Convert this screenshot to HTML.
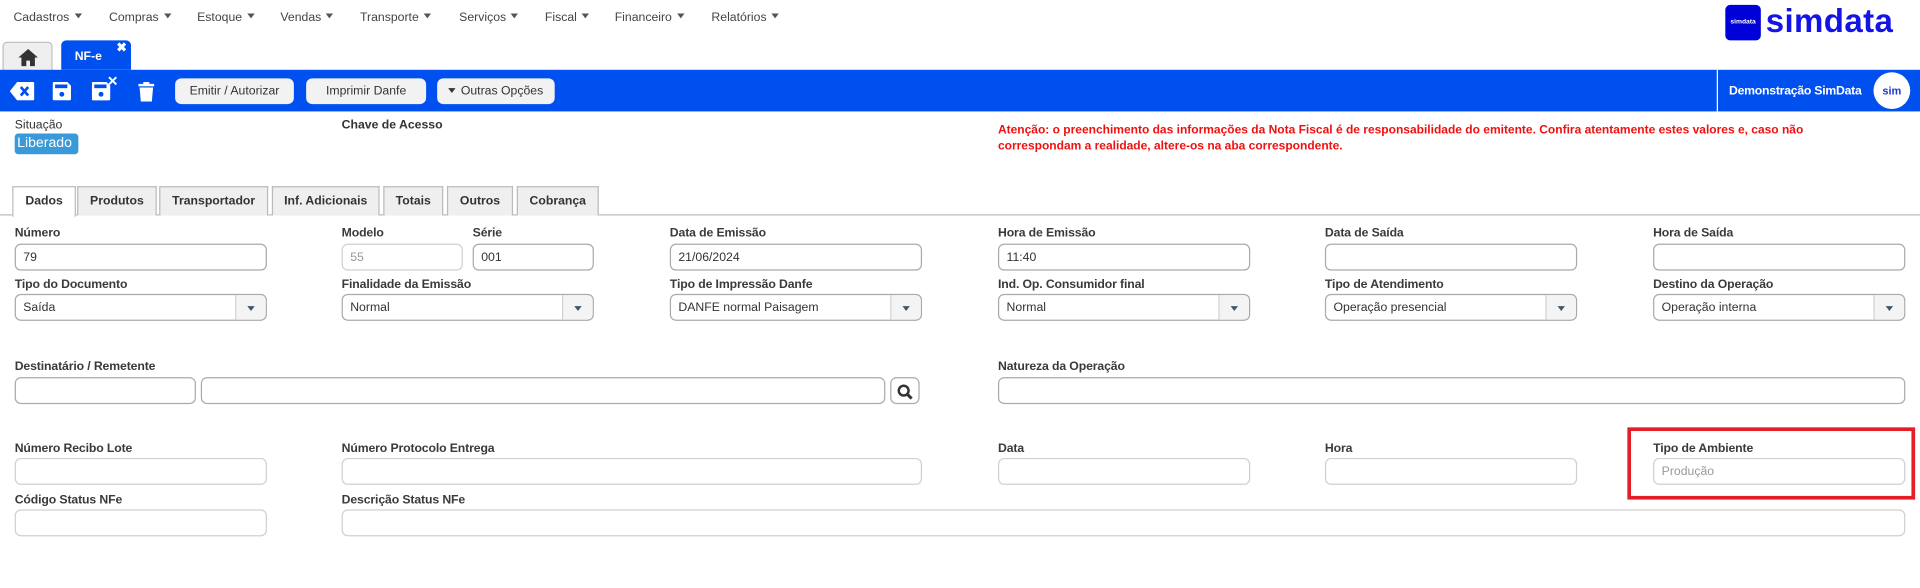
<!DOCTYPE html>
<html><head><meta charset="utf-8">
<style>
*{box-sizing:border-box;margin:0;padding:0}
html,body{width:1920px;height:588px;overflow:hidden;background:#fff}
#w{position:absolute;left:0;top:0;width:1568px;height:480px;transform:scale(1.2245);transform-origin:0 0;font-family:"Liberation Sans",sans-serif;color:#333}
.a{position:absolute}
.menu{top:9px;font-size:10px;color:#444}
.menu span{position:absolute;white-space:nowrap}
.car{display:inline-block;border-left:3px solid transparent;border-right:3px solid transparent;border-top:4px solid #555;vertical-align:middle;margin-left:4px;margin-top:-2px}
.lbl{position:absolute;font-size:10px;font-weight:bold;color:#3a3a3a;white-space:nowrap;letter-spacing:-0.1px}
.inp{position:absolute;height:22px;border:1px solid #aaa;border-radius:5px;background:#fff;font-size:10px;color:#333;padding:5px 6px;white-space:nowrap}
.dis{border-color:#d0d0d0;color:#999}
.sel .dd{position:absolute;right:0;top:0;bottom:0;width:25px;border-left:1px solid #ccc;background:#f4f4f4;border-radius:0 5px 5px 0}
.sel .dd:after{content:"";position:absolute;left:9px;top:9px;border-left:3px solid transparent;border-right:3px solid transparent;border-top:4px solid #456}
.tab{position:absolute;top:152px;height:24px;border:1px solid #bbb;border-bottom:none;background:#efefef;font-size:10px;font-weight:bold;text-align:center;padding-top:6px;color:#333}
.btn{position:absolute;top:64px;height:21px;background:#f2f2f2;border-radius:5px;font-size:10px;color:#333;text-align:center;padding-top:5px}
</style></head><body><div id="w">
<div class="a menu" style="left:0;width:700px">
<span style="left:11px">Cadastros<i class="car"></i></span>
<span style="left:89px">Compras<i class="car"></i></span>
<span style="left:161px">Estoque<i class="car"></i></span>
<span style="left:229px">Vendas<i class="car"></i></span>
<span style="left:294px">Transporte<i class="car"></i></span>
<span style="left:375px">Serviços<i class="car"></i></span>
<span style="left:445px">Fiscal<i class="car"></i></span>
<span style="left:502px">Financeiro<i class="car"></i></span>
<span style="left:581px">Relatórios<i class="car"></i></span>
</div>
<div class="a" style="left:1409px;top:4px;width:29px;height:29px;background:#0000d8;border-radius:4px;color:#fff;font-size:5.5px;font-weight:bold;text-align:center;padding-top:11px">simdata</div>
<div class="a" style="left:1442px;top:2px;font-size:27px;font-weight:bold;color:#1414e6;letter-spacing:0.3px">simdata</div>
<div class="a" style="left:2px;top:34px;width:41px;height:24px;border:1px solid #bbb;border-bottom:none;border-radius:4px 4px 0 0;background:#efefef">
<svg width="18" height="16" viewBox="0 0 18 16" style="position:absolute;left:11px;top:4px"><path d="M9 1 L1 8 H3.5 V15 H7.5 V10.5 H10.5 V15 H14.5 V8 H17 Z" fill="#333"/></svg></div>
<div class="a" style="left:50px;top:33px;width:57px;height:24px;background:#0050ef;border-radius:4px 4px 0 0;color:#fff;font-size:10px;font-weight:bold;padding:8px 0 0 11px">NF-e<span style="position:absolute;left:45px;top:1px;font-size:10px">✖</span></div>
<div class="a" style="left:0;top:57px;width:1568px;height:34px;background:#0050ef"></div>
<div class="a" style="left:1402px;top:57px;width:1px;height:34px;background:#fff"></div>
<div class="a" style="left:1412px;top:69px;font-size:10px;font-weight:bold;color:#fff;letter-spacing:-0.2px">Demonstração SimData</div>
<div class="a" style="left:1530px;top:59px;width:30px;height:30px;border-radius:50%;background:#fff;color:#1a3acc;font-size:9px;font-weight:bold;text-align:center;padding-top:10px">sim</div>
<svg class="a" style="left:8px;top:67px" width="20" height="15" viewBox="0 0 20 15"><path d="M6 0 H19 a1 1 0 0 1 1 1 V14 a1 1 0 0 1 -1 1 H6 L0 7.5 Z" fill="#fff"/><path d="M9 4 L15 11 M15 4 L9 11" stroke="#0050ef" stroke-width="2.2"/></svg>
<svg class="a" style="left:43px;top:67px" width="15" height="15" viewBox="0 0 15 15"><path d="M0 1 a1 1 0 0 1 1 -1 H12 L15 3 V14 a1 1 0 0 1 -1 1 H1 a1 1 0 0 1 -1 -1 Z" fill="#fff"/><rect x="2" y="2" width="10" height="3" fill="#0050ef"/><circle cx="7.5" cy="10" r="2" fill="#0050ef"/></svg>
<svg class="a" style="left:75px;top:62px" width="22" height="22" viewBox="0 0 22 22"><path d="M0 6 a1 1 0 0 1 1 -1 H12 L15 8 V19 a1 1 0 0 1 -1 1 H1 a1 1 0 0 1 -1 -1 Z" fill="#fff"/><rect x="2" y="7" width="10" height="3" fill="#0050ef"/><circle cx="7.5" cy="15" r="2" fill="#0050ef"/><path d="M14 1 L20 7 M20 1 L14 7" stroke="#fff" stroke-width="1.6"/></svg>
<svg class="a" style="left:113px;top:67px" width="13" height="16" viewBox="0 0 13 16"><rect x="0" y="1.5" width="13" height="2" fill="#fff"/><rect x="4" y="0" width="5" height="2" fill="#fff"/><path d="M1 4.5 H12 L11 16 H2 Z" fill="#fff"/></svg>
<div class="btn" style="left:143px;width:97px">Emitir / Autorizar</div>
<div class="btn" style="left:250px;width:98px">Imprimir Danfe</div>
<div class="btn" style="left:357px;width:96px"><i class="car" style="margin:0 4px 0 0;border-top-color:#333"></i>Outras Opções</div>
<div class="a" style="left:12px;top:97px;font-size:10px;color:#333">Situação</div>
<div class="a" style="left:12px;top:109px;width:52px;height:17px;background:#3a9ad9;border-radius:3px;color:#fff;font-size:11.5px;padding:2px 0 0 2px">Liberado</div>
<div class="a" style="left:279px;top:97px;font-size:10px;font-weight:bold;color:#333">Chave de Acesso</div>
<div class="a" style="left:815px;top:100px;font-size:9.8px;font-weight:bold;color:#f01010;line-height:13px;width:725px">Atenção: o preenchimento das informações da Nota Fiscal é de responsabilidade do emitente. Confira atentamente estes valores e, caso não correspondam a realidade, altere-os na aba correspondente.</div>
<div class="a" style="left:0;top:175px;width:1568px;height:1px;background:#bbb"></div>
<div class="tab" style="left:10px;width:52px;background:#fff;height:25px">Dados</div>
<div class="tab" style="left:63px;width:65px">Produtos</div>
<div class="tab" style="left:130px;width:89px">Transportador</div>
<div class="tab" style="left:222px;width:88px">Inf. Adicionais</div>
<div class="tab" style="left:313px;width:49px">Totais</div>
<div class="tab" style="left:365px;width:54px">Outros</div>
<div class="tab" style="left:422px;width:67px">Cobrança</div>
<div class="lbl" style="left:12px;top:185px">Número</div><div class="inp" style="left:12px;top:199px;width:206px">79</div>
<div class="lbl" style="left:279px;top:185px">Modelo</div><div class="inp dis" style="left:279px;top:199px;width:99px">55</div>
<div class="lbl" style="left:386px;top:185px">Série</div><div class="inp" style="left:386px;top:199px;width:99px">001</div>
<div class="lbl" style="left:547px;top:185px">Data de Emissão</div><div class="inp" style="left:547px;top:199px;width:206px">21/06/2024</div>
<div class="lbl" style="left:815px;top:185px">Hora de Emissão</div><div class="inp" style="left:815px;top:199px;width:206px">11:40</div>
<div class="lbl" style="left:1082px;top:185px">Data de Saída</div><div class="inp" style="left:1082px;top:199px;width:206px"></div>
<div class="lbl" style="left:1350px;top:185px">Hora de Saída</div><div class="inp" style="left:1350px;top:199px;width:206px"></div>
<div class="lbl" style="left:12px;top:227px">Tipo do Documento</div><div class="inp sel" style="left:12px;top:240px;width:206px">Saída<div class="dd"></div></div>
<div class="lbl" style="left:279px;top:227px">Finalidade da Emissão</div><div class="inp sel" style="left:279px;top:240px;width:206px">Normal<div class="dd"></div></div>
<div class="lbl" style="left:547px;top:227px">Tipo de Impressão Danfe</div><div class="inp sel" style="left:547px;top:240px;width:206px">DANFE normal Paisagem<div class="dd"></div></div>
<div class="lbl" style="left:815px;top:227px">Ind. Op. Consumidor final</div><div class="inp sel" style="left:815px;top:240px;width:206px">Normal<div class="dd"></div></div>
<div class="lbl" style="left:1082px;top:227px">Tipo de Atendimento</div><div class="inp sel" style="left:1082px;top:240px;width:206px">Operação presencial<div class="dd"></div></div>
<div class="lbl" style="left:1350px;top:227px">Destino da Operação</div><div class="inp sel" style="left:1350px;top:240px;width:206px">Operação interna<div class="dd"></div></div>
<div class="lbl" style="left:12px;top:294px">Destinatário / Remetente</div>
<div class="inp" style="left:12px;top:308px;width:148px"></div>
<div class="inp" style="left:164px;top:308px;width:559px"></div>
<div class="inp" style="left:727px;top:308px;width:24px;padding:0">
<svg width="14" height="14" viewBox="0 0 14 14" style="position:absolute;left:4px;top:3.5px"><circle cx="6" cy="6" r="4" fill="none" stroke="#333" stroke-width="2"/><path d="M9 9 L12.5 12.5" stroke="#333" stroke-width="2.4"/></svg></div>
<div class="lbl" style="left:815px;top:294px">Natureza da Operação</div><div class="inp" style="left:815px;top:308px;width:741px"></div>
<div class="lbl" style="left:12px;top:361px">Número Recibo Lote</div><div class="inp dis" style="left:12px;top:374px;width:206px"></div>
<div class="lbl" style="left:279px;top:361px">Número Protocolo Entrega</div><div class="inp dis" style="left:279px;top:374px;width:474px"></div>
<div class="lbl" style="left:815px;top:361px">Data</div><div class="inp dis" style="left:815px;top:374px;width:206px"></div>
<div class="lbl" style="left:1082px;top:361px">Hora</div><div class="inp dis" style="left:1082px;top:374px;width:206px"></div>
<div class="lbl" style="left:1350px;top:361px">Tipo de Ambiente</div><div class="inp dis" style="left:1350px;top:374px;width:206px">Produção</div>
<div class="a" style="left:1329px;top:349px;width:235px;height:59px;border:3px solid #e41e26"></div>
<div class="lbl" style="left:12px;top:403px">Código Status NFe</div><div class="inp dis" style="left:12px;top:416px;width:206px"></div>
<div class="lbl" style="left:279px;top:403px">Descrição Status NFe</div><div class="inp dis" style="left:279px;top:416px;width:1277px"></div>
</div></body></html>
